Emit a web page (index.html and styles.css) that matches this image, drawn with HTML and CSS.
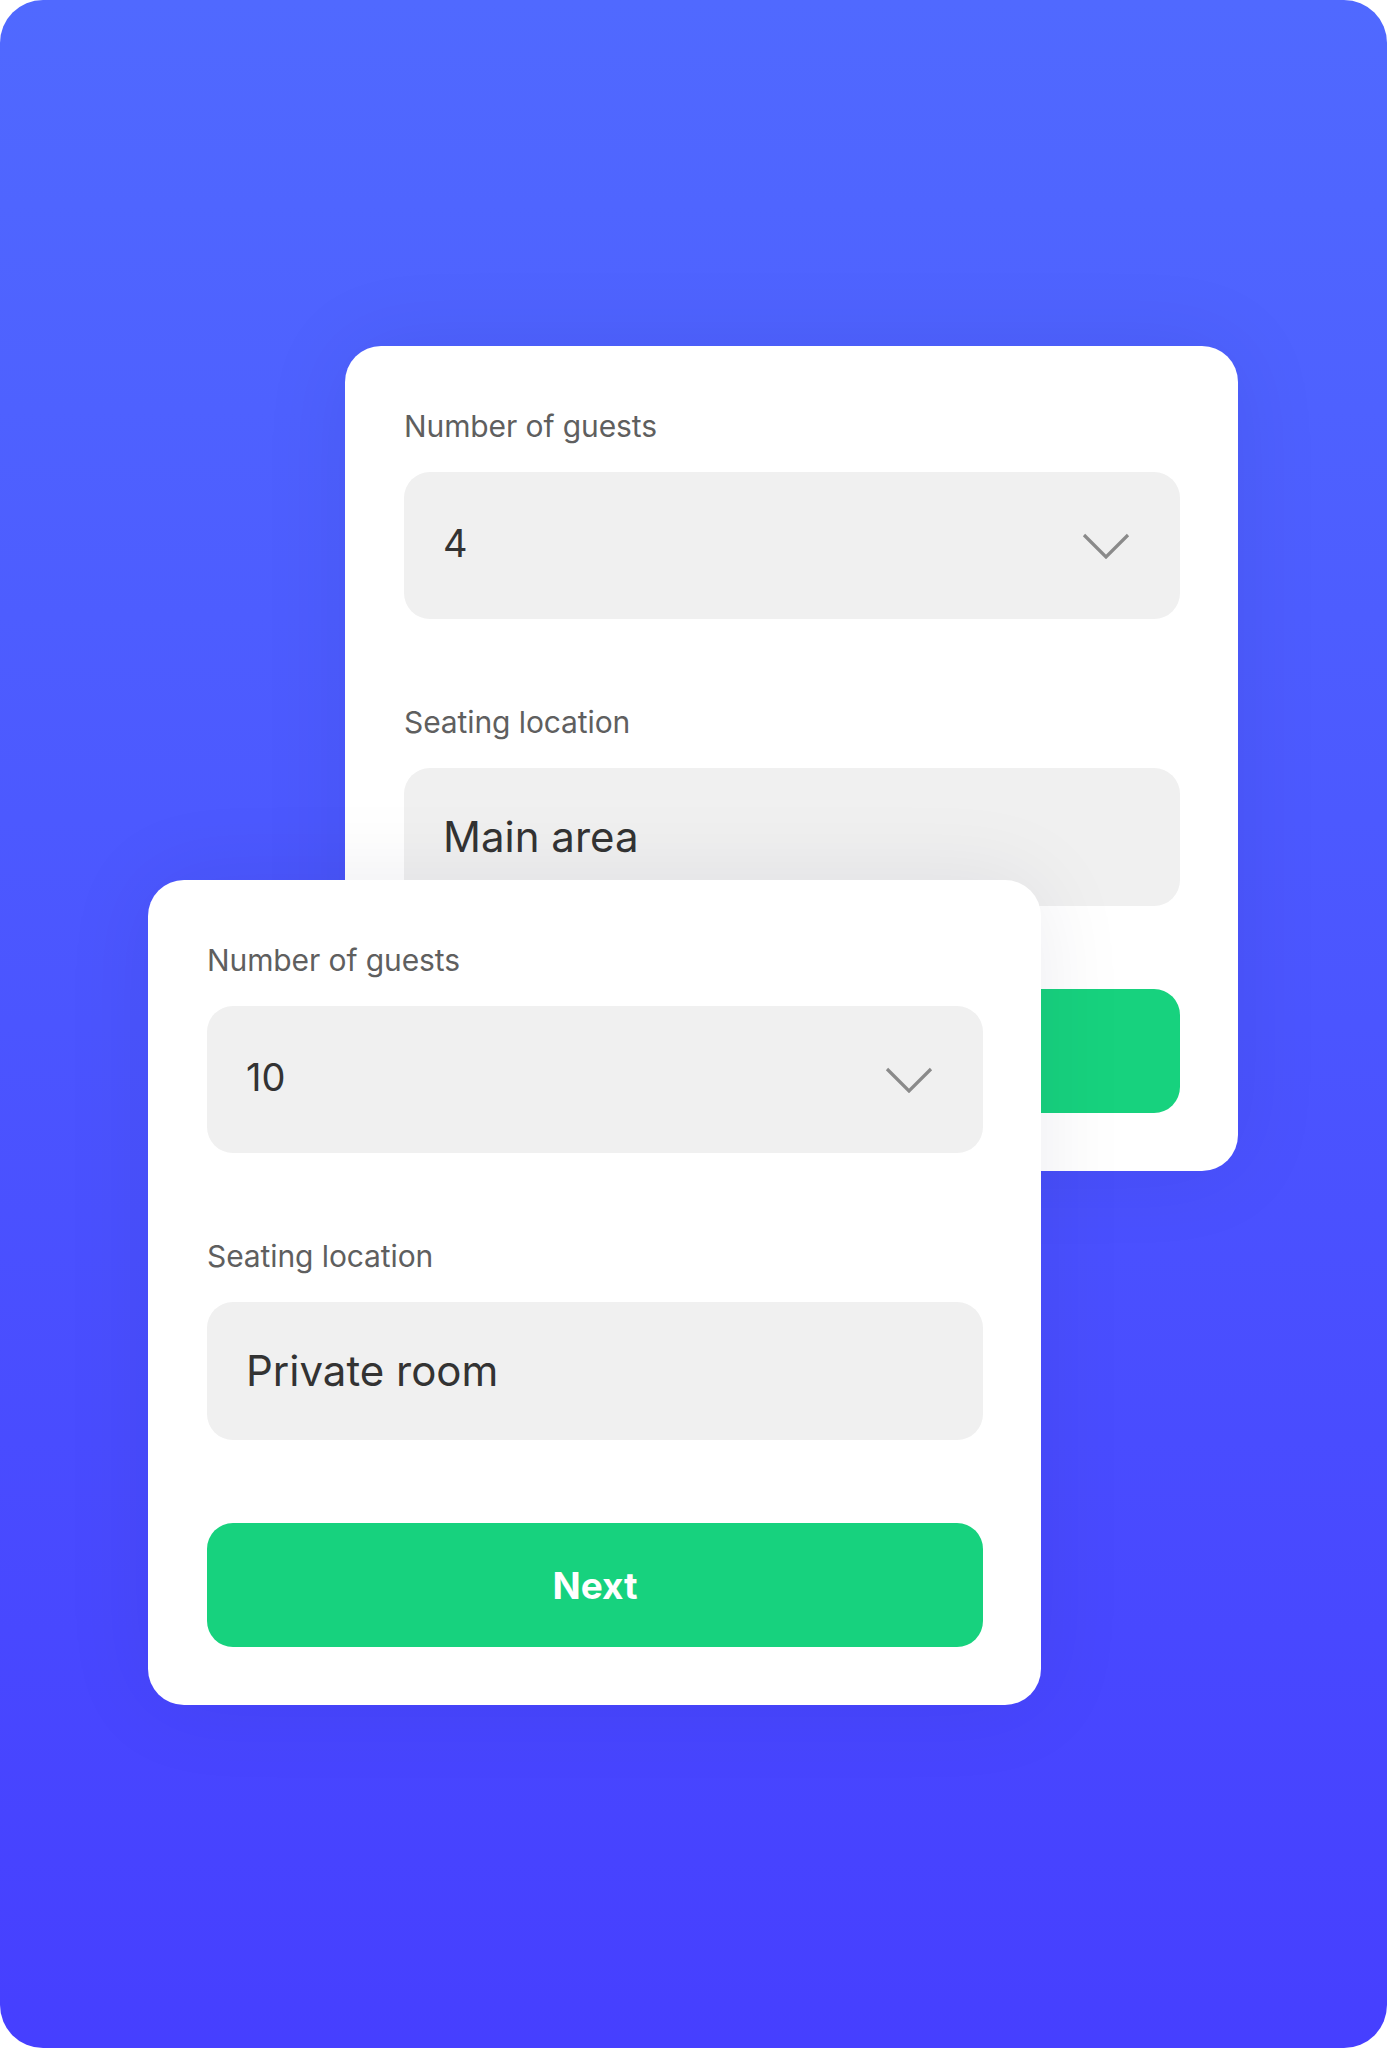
FILE: index.html
```html
<!DOCTYPE html>
<html lang="en">
<head>
    <meta charset="UTF-8">
    <meta name="viewport" content="width=device-width, initial-scale=1.0">
    <title>Reservation - Guests</title>
    <link rel="stylesheet" href="styles.css">
</head>
<body>
    <div class="canvas">
        <div class="scene">
            <!-- card in the back -->
            <div class="booking-card booking-card-back">
                <div class="field">
                    <label class="field-label">Number of guests</label>
                    <div class="field-box field-select">
                        <span class="field-value">4</span>
                        <svg class="chevron" viewBox="0 0 48 26" width="48" height="26">
                            <path d="M2 2 L24 24 L46 2" fill="none" stroke="#8a8a8a" stroke-width="3.2"/>
                        </svg>
                    </div>
                </div>
                <div class="field">
                    <label class="field-label">Seating location</label>
                    <div class="field-box field-input">
                        <span class="field-value">Main area</span>
                    </div>
                </div>
                <button class="btn-next">Next</button>
            </div>

            <!-- card in front -->
            <div class="booking-card booking-card-front">
                <div class="field">
                    <label class="field-label">Number of guests</label>
                    <div class="field-box field-select">
                        <span class="field-value">10</span>
                        <svg class="chevron" viewBox="0 0 48 26" width="48" height="26">
                            <path d="M2 2 L24 24 L46 2" fill="none" stroke="#8a8a8a" stroke-width="3.2"/>
                        </svg>
                    </div>
                </div>
                <div class="field">
                    <label class="field-label">Seating location</label>
                    <div class="field-box field-input">
                        <span class="field-value">Private room</span>
                    </div>
                </div>
                <button class="btn-next">Next</button>
            </div>
        </div>
    </div>
</body>
</html>
```

FILE: styles.css
```css
* {
    margin: 0;
    padding: 0;
    box-sizing: border-box;
}

body {
    font-family: 'Inter', 'Liberation Sans', sans-serif;
    background: #ffffff;
    width: 1387px;
    height: 2048px;
}

.canvas {
    width: 1387px;
    height: 2048px;
    border-radius: 43px;
    overflow: hidden;
    background: linear-gradient(180deg, #5069ff 0%, #4b55ff 50%, #463fff 100%);
}

.scene {
    display: grid;
    align-items: start;
    padding: 346px 0 0 148px;
}

.booking-card {
    grid-area: 1 / 1;
    width: 893px;
    background: #ffffff;
    border-radius: 36px;
    padding: 63px 58px 58px 59px;
    display: flex;
    flex-direction: column;
    box-shadow: 0 0 90px rgba(20, 20, 60, 0.08);
}

.booking-card-back {
    margin-left: 197px;
}

.booking-card-front {
    margin-top: 534px;
}

.field {
    display: flex;
    flex-direction: column;
    gap: 29px;
    margin-bottom: 86px;
}

.field + .field {
    margin-bottom: 83px;
}

.field-label {
    font-size: 30px;
    line-height: 34px;
    color: #5f5f5f;
    letter-spacing: -0.1px;
}

.field-box {
    background: #f0f0f0;
    border-radius: 26px;
    display: flex;
    align-items: center;
    padding: 0 50px 0 39px;
}

.field-select {
    height: 147px;
    justify-content: space-between;
}

.field-input {
    height: 138px;
}

.field-value {
    font-size: 42px;
    color: #333333;
    line-height: 1;
}

.field-select .field-value {
    font-size: 38px;
    margin-top: -6px;
}

.chevron {
    display: block;
}

.btn-next {
    height: 124px;
    border: none;
    border-radius: 26px;
    background: #17d27e;
    color: #ffffff;
    font-family: 'Inter', 'Liberation Sans', sans-serif;
    font-size: 37px;
    font-weight: 700;
    cursor: pointer;
}
```
